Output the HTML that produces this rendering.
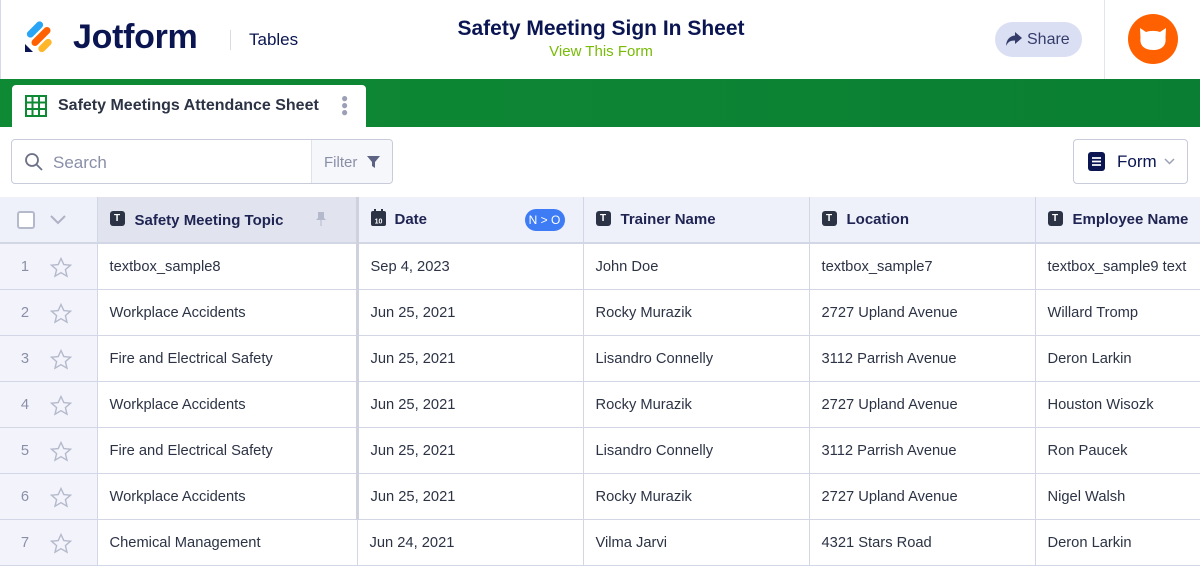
<!DOCTYPE html>
<html><head><style>
*{box-sizing:border-box;margin:0;padding:0}
body{width:1200px;height:566px;overflow:hidden;background:#fff;font-family:"Liberation Sans",sans-serif;color:#2c3345;position:relative}
.hdr{position:absolute;left:0;top:0;width:1200px;height:79px;background:#fff;border-left:1px solid #d6d9e8}
.green{position:absolute;left:0;top:79px;width:1200px;height:48px;background:linear-gradient(90deg,#0f8a34,#0a7f33)}
.tab{position:absolute;left:12px;top:85px;width:354px;height:42px;background:#fff;border-radius:4px 4px 0 0}
.abs{position:absolute}
table{position:absolute;left:0;top:197px;border-collapse:collapse;table-layout:fixed;width:1235px}
td{height:46px;border-bottom:1px solid #d3d6e4;border-right:1px solid #d3d6e4;font-size:14.7px;padding-left:12px;padding-top:2px;white-space:nowrap;overflow:hidden;color:#2c3345;vertical-align:middle}
tr.h td{background:#eef0fa;font-weight:bold;color:#1f2452;font-size:15px;border-bottom:2px solid #d3d6e4;padding-top:0}
td.n{background:#f3f4fb;color:#8a8fa8;padding-left:0}
td.topic{border-right:3px solid #cfd2dc}
.ti{display:inline-block;width:15px;height:15px;background:#2c3345;border-radius:3px;color:#fff;font-size:10px;text-align:center;line-height:15px;vertical-align:middle;margin-right:10px;position:relative;top:-2px}
.star{display:inline-block;vertical-align:middle}
</style></head><body>
<div class="hdr">
  <svg class="abs" style="left:22px;top:20px" width="34" height="34" viewBox="0 0 34 34">
    <rect x="2" y="6" width="20" height="7" rx="3.5" fill="#2aa5f5" transform="rotate(-45 12 9.5)"/>
    <rect x="6" y="13" width="24" height="7" rx="3.5" fill="#ff6100" transform="rotate(-45 18 16.5)"/>
    <rect x="14" y="22" width="16" height="7" rx="3.5" fill="#ffb629" transform="rotate(-45 22 25.5)"/>
    <path d="M2 24 L2 32 L10 32 Z" fill="#0a1551"/>
  </svg>
  <div class="abs" style="left:72px;top:18px;font-size:34px;font-weight:bold;color:#0a1551;letter-spacing:-0.3px">Jotform</div>
  <div class="abs" style="left:229px;top:30px;width:1px;height:20px;background:#d8dbe6"></div>
  <div class="abs" style="left:248px;top:30px;font-size:17px;color:#0a1551">Tables</div>
  <div class="abs" style="left:0;width:1200px;top:17px;text-align:center;font-size:21px;font-weight:bold;color:#0a1551">Safety Meeting Sign In Sheet</div>
  <div class="abs" style="left:0;width:1200px;top:43px;text-align:center;font-size:15px;color:#78bb07">View This Form</div>
  <div class="abs" style="left:994px;top:22px;width:87px;height:35px;border-radius:18px;background:#dbdff3;font-size:16px;color:#343c6a;padding:9px 0 0 32px">Share</div>
  <svg class="abs" style="left:1004px;top:31px" width="18" height="16" viewBox="0 0 18 16"><path d="M10 1 L17 7 L10 13 L10 9.5 C5 9.5 3 11 1 15 C1.5 8 5 5 10 4.5 Z" fill="#343c6a"/></svg>
  <div class="abs" style="left:1103px;top:0;width:1px;height:79px;background:#e2e4ee"></div>
  <svg class="abs" style="left:1127px;top:14px" width="50" height="50" viewBox="0 0 50 50"><circle cx="25" cy="25" r="25" fill="#ff6100"/><path d="M12 14 L18 18 C22 16.5 28 16.5 32 18 L38 14 L37.5 24 C38.5 32 33 36 25 36 C17 36 11.5 32 12.5 24 Z" fill="#fff"/></svg>
</div>
<div class="green"></div>
<div class="tab">
  <svg class="abs" style="left:13px;top:10px" width="22" height="22" viewBox="0 0 22 22"><rect x="1" y="1" width="20" height="20" fill="none" stroke="#0f8a34" stroke-width="2"/><path d="M1 7.5H21M1 14H21M7.5 1V21M14 1V21" stroke="#0f8a34" stroke-width="2"/></svg>
  <div class="abs" style="left:46px;top:12px;font-size:16px;font-weight:bold;color:#2c3345">Safety Meetings Attendance Sheet</div>
  <div class="abs" style="left:329px;top:10px;width:4px;line-height:7px;font-size:12px;color:#9ca0b6">●<br>●<br>●</div>
</div>
<div class="abs" style="left:11px;top:139px;width:382px;height:45px;border:1px solid #c8cbd9;border-radius:4px;background:#fff"></div>
<div class="abs" style="left:311px;top:140px;width:81px;height:43px;background:#f6f7fb;border-left:1px solid #e0e2ea;border-radius:0 4px 4px 0"></div>
<svg class="abs" style="left:24px;top:152px" width="20" height="20" viewBox="0 0 20 20"><circle cx="8" cy="8" r="6" fill="none" stroke="#6c7188" stroke-width="1.8"/><path d="M12.5 12.5 L18 18" stroke="#6c7188" stroke-width="1.8"/></svg>
<div class="abs" style="left:53px;top:153px;font-size:17px;color:#8a8fa8">Search</div>
<div class="abs" style="left:324px;top:154px;font-size:15px;color:#8a8fa8">Filter</div>
<svg class="abs" style="left:367px;top:156px" width="13" height="13" viewBox="0 0 13 13"><path d="M0 0H13L8 6V12L5 10V6Z" fill="#5d6383"/></svg>
<div class="abs" style="left:1073px;top:139px;width:115px;height:45px;border:1px solid #c8cbd9;border-radius:4px"></div>
<svg class="abs" style="left:1088px;top:152px" width="17" height="19" viewBox="0 0 17 19"><rect width="17" height="19" rx="3" fill="#0a1551"/><path d="M4 6H13M4 9.5H13M4 13H13" stroke="#fff" stroke-width="1.8"/></svg>
<div class="abs" style="left:1117px;top:152px;font-size:17px;color:#0a1551">Form</div>
<svg class="abs" style="left:1164px;top:158px" width="11" height="7" viewBox="0 0 11 7"><path d="M1 1L5.5 5.5L10 1" fill="none" stroke="#9ca0b6" stroke-width="1.5"/></svg>
<table>
<colgroup><col style="width:97px"><col style="width:260px"><col style="width:226px"><col style="width:226px"><col style="width:226px"><col style="width:200px"></colgroup>
<tr class="h"><td class="n" style="background:#eef0fa"><span style="display:inline-block;width:18px;height:18px;border:2px solid #b5b9cc;border-radius:3px;background:#fff;margin-left:17px;vertical-align:middle"></span><svg style="margin-left:15px;vertical-align:middle" width="16" height="10" viewBox="0 0 16 10"><path d="M1 1L8 8L15 1" fill="none" stroke="#aeb2c4" stroke-width="2"/></svg></td>
<td class="topic" style="background:#e1e4ef"><span class="ti">T</span>Safety Meeting Topic<svg style="position:relative;left:32px;top:1px" width="12" height="14" viewBox="0 0 12 14"><path d="M3 0H9V6L11 8H1L3 6Z M5.5 8H6.5V14H5.5Z" fill="#b5b9cc"/></svg></td>
<td style="position:relative"><svg style="vertical-align:middle;position:relative;top:-2px;margin-right:9px" width="15" height="17" viewBox="0 0 15 17"><rect y="2" width="15" height="15" rx="2" fill="#2c3345"/><rect x="3" y="0" width="2" height="4" fill="#2c3345"/><rect x="10" y="0" width="2" height="4" fill="#2c3345"/><text x="7.5" y="14.5" font-size="7" fill="#fff" text-anchor="middle" font-family="Liberation Sans">10</text></svg>Date<span style="position:absolute;left:166px;top:12px;width:40px;height:22px;border-radius:11px;background:#3e7cf6;color:#fff;font-size:12px;font-weight:normal;text-align:center;line-height:22px">N &gt; O</span></td>
<td><span class="ti">T</span>Trainer Name</td>
<td><span class="ti">T</span>Location</td>
<td><span class="ti">T</span>Employee Name</td></tr>
<tr><td class="n"><span style="display:inline-block;width:50px;text-align:center">1</span><svg class="star" width="22" height="21" viewBox="0 0 22 21"><path d="M11 1.5L13.8 7.6L20.5 8.2L15.4 12.6L17 19.2L11 15.7L5 19.2L6.6 12.6L1.5 8.2L8.2 7.6Z" fill="none" stroke="#b5b9cc" stroke-width="1.4"/></svg></td><td class="topic">textbox_sample8</td><td>Sep 4, 2023</td><td>John Doe</td><td>textbox_sample7</td><td>textbox_sample9 text</td></tr>
<tr><td class="n"><span style="display:inline-block;width:50px;text-align:center">2</span><svg class="star" width="22" height="21" viewBox="0 0 22 21"><path d="M11 1.5L13.8 7.6L20.5 8.2L15.4 12.6L17 19.2L11 15.7L5 19.2L6.6 12.6L1.5 8.2L8.2 7.6Z" fill="none" stroke="#b5b9cc" stroke-width="1.4"/></svg></td><td class="topic">Workplace Accidents</td><td>Jun 25, 2021</td><td>Rocky Murazik</td><td>2727 Upland Avenue</td><td>Willard Tromp</td></tr>
<tr><td class="n"><span style="display:inline-block;width:50px;text-align:center">3</span><svg class="star" width="22" height="21" viewBox="0 0 22 21"><path d="M11 1.5L13.8 7.6L20.5 8.2L15.4 12.6L17 19.2L11 15.7L5 19.2L6.6 12.6L1.5 8.2L8.2 7.6Z" fill="none" stroke="#b5b9cc" stroke-width="1.4"/></svg></td><td class="topic">Fire and Electrical Safety</td><td>Jun 25, 2021</td><td>Lisandro Connelly</td><td>3112 Parrish Avenue</td><td>Deron Larkin</td></tr>
<tr><td class="n"><span style="display:inline-block;width:50px;text-align:center">4</span><svg class="star" width="22" height="21" viewBox="0 0 22 21"><path d="M11 1.5L13.8 7.6L20.5 8.2L15.4 12.6L17 19.2L11 15.7L5 19.2L6.6 12.6L1.5 8.2L8.2 7.6Z" fill="none" stroke="#b5b9cc" stroke-width="1.4"/></svg></td><td class="topic">Workplace Accidents</td><td>Jun 25, 2021</td><td>Rocky Murazik</td><td>2727 Upland Avenue</td><td>Houston Wisozk</td></tr>
<tr><td class="n"><span style="display:inline-block;width:50px;text-align:center">5</span><svg class="star" width="22" height="21" viewBox="0 0 22 21"><path d="M11 1.5L13.8 7.6L20.5 8.2L15.4 12.6L17 19.2L11 15.7L5 19.2L6.6 12.6L1.5 8.2L8.2 7.6Z" fill="none" stroke="#b5b9cc" stroke-width="1.4"/></svg></td><td class="topic">Fire and Electrical Safety</td><td>Jun 25, 2021</td><td>Lisandro Connelly</td><td>3112 Parrish Avenue</td><td>Ron Paucek</td></tr>
<tr><td class="n"><span style="display:inline-block;width:50px;text-align:center">6</span><svg class="star" width="22" height="21" viewBox="0 0 22 21"><path d="M11 1.5L13.8 7.6L20.5 8.2L15.4 12.6L17 19.2L11 15.7L5 19.2L6.6 12.6L1.5 8.2L8.2 7.6Z" fill="none" stroke="#b5b9cc" stroke-width="1.4"/></svg></td><td class="topic">Workplace Accidents</td><td>Jun 25, 2021</td><td>Rocky Murazik</td><td>2727 Upland Avenue</td><td>Nigel Walsh</td></tr>
<tr><td class="n"><span style="display:inline-block;width:50px;text-align:center">7</span><svg class="star" width="22" height="21" viewBox="0 0 22 21"><path d="M11 1.5L13.8 7.6L20.5 8.2L15.4 12.6L17 19.2L11 15.7L5 19.2L6.6 12.6L1.5 8.2L8.2 7.6Z" fill="none" stroke="#b5b9cc" stroke-width="1.4"/></svg></td><td class="topic" style="border-right:1px solid #d3d6e4">Chemical Management</td><td>Jun 24, 2021</td><td>Vilma Jarvi</td><td>4321 Stars Road</td><td>Deron Larkin</td></tr>
</table>
</body></html>
